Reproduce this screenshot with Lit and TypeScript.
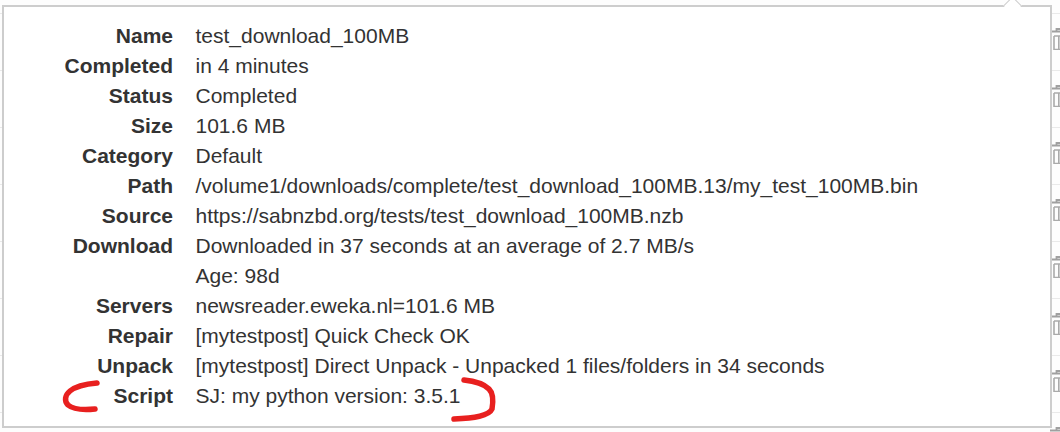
import { LitElement, html, css, svg } from "lit";
import { customElement } from "lit/decorators.js";

const ROWS: [string, string][] = [
  ["Name", "test_download_100MB"],
  ["Completed", "in 4 minutes"],
  ["Status", "Completed"],
  ["Size", "101.6 MB"],
  ["Category", "Default"],
  ["Path", "/volume1/downloads/complete/test_download_100MB.13/my_test_100MB.bin"],
  ["Source", "https://sabnzbd.org/tests/test_download_100MB.nzb"],
  ["Download", "Downloaded in 37 seconds at an average of 2.7 MB/s"],
  ["", "Age: 98d"],
  ["Servers", "newsreader.eweka.nl=101.6 MB"],
  ["Repair", "[mytestpost] Quick Check OK"],
  ["Unpack", "[mytestpost] Direct Unpack - Unpacked 1 files/folders in 34 seconds"],
  ["Script", "SJ: my python version: 3.5.1"],
];

const trash = svg`<svg class="trash" width="10" height="24" viewBox="0 0 10 24">
  <path d="M0 5.5H10M6.5 5V3H10" fill="none" stroke="#a0a0a0" stroke-width="1.8"/>
  <path d="M4 10V23.5H10M4 10H10M8.8 10V23" fill="none" stroke="#aaaaaa" stroke-width="1.6"/>
</svg>`;

@customElement("app-root")
export class AppRoot extends LitElement {
  static styles = css`
    :host {
      display: block;
      position: relative;
      width: 1060px;
      height: 432px;
      overflow: hidden;
      background: #fdfdfd;
      font-family: "Liberation Sans", Arial, sans-serif;
    }
    .bg-rows {
      display: flex;
      flex-direction: column;
      padding-top: 13px;
    }
    .bg-row {
      box-sizing: border-box;
      height: 57px;
      border-top: 1px solid #e9e9e9;
      display: flex;
      justify-content: flex-end;
      padding-top: 12px;
      flex: none;
    }
    .trash {
      display: block;
    }
    .popover {
      position: absolute;
      left: 2px;
      top: 5px;
      width: 1050px;
      height: 423px;
      box-sizing: border-box;
      background: #fff;
      border: 2px solid #cdcdcd;
      padding: 14px 0 0;
    }
    .arrow {
      position: absolute;
      left: 1002px;
      top: -8px;
      width: 12px;
      height: 12px;
      background: #fff;
      border-left: 1px solid #cdcdcd;
      border-top: 1px solid #cdcdcd;
      transform: rotate(45deg);
    }
    .grid {
      display: grid;
      grid-template-columns: 169px 1fr;
      column-gap: 22.5px;
      grid-auto-rows: 30px;
      font-size: 21px;
      line-height: 30px;
      color: #333;
    }
    .label {
      font-weight: 700;
      text-align: right;
    }
    .value {
      white-space: nowrap;
    }
    .scribble {
      position: absolute;
      left: 0;
      top: 0;
      pointer-events: none;
    }
  `;

  render() {
    return html`
      <div class="bg-rows">
        ${Array.from({ length: 8 }, () => html`<div class="bg-row">${trash}</div>`)}
      </div>
      <div class="popover">
        <div class="arrow"></div>
        <div class="grid">
          ${ROWS.map(
            ([k, v]) => html`<div class="label">${k}</div><div class="value">${v}</div>`
          )}
        </div>
      </div>
      <svg class="scribble" width="1060" height="432" viewBox="0 0 1060 432" fill="none"
        stroke="#e8201f" stroke-width="5.5" stroke-linecap="round" stroke-linejoin="round">
        <path d="M97 383C86 384 76 386 70 391C65 395 64 401 68 405C74 410 85 410 95 409" />
        <path d="M464 380C474 381 484 384 489 389C494 394 493 403 492 409C489 416 474 418 454 419" />
      </svg>
    `;
  }
}
